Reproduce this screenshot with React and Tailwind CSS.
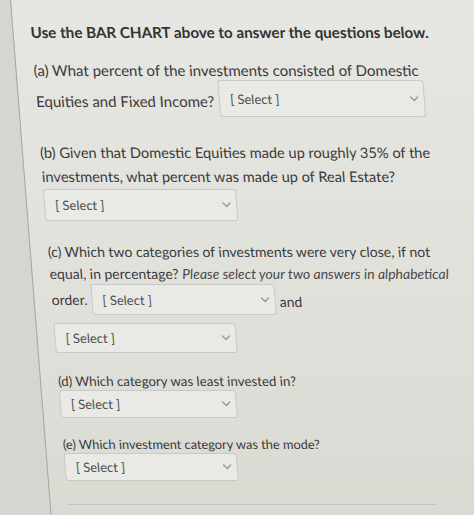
import React from "react";

function Chevron() {
  return (
    <svg width="9" height="6" viewBox="0 0 9 6" fill="none" className="shrink-0">
      <path d="M1 1l3.5 3.5L8 1" stroke="#9a9b97" strokeWidth="1.4" strokeLinecap="round" />
    </svg>
  );
}

function Select({ className = "" }) {
  return (
    <div
      className={
        "flex items-center justify-between rounded-[3px] border border-[#c9cac5] bg-[#e9e9e5] pl-[10px] pr-[5px] text-[13px] leading-5 text-[#505050] " +
        className
      }
    >
      <span>[ Select ]</span>
      <Chevron />
    </div>
  );
}

export default function App() {
  return (
    <div
      className="relative h-[515px] w-[474px] overflow-hidden bg-[#d4d6d1] text-[15px] leading-6 text-[#3a3a3a]"
      style={{ fontFamily: "Lato, 'Noto Sans', 'Liberation Sans', sans-serif" }}
    >
      <div className="ml-[10px] h-[560px] w-[520px] origin-top-left skew-x-[4.5deg] border-l border-[#a4a6a2] bg-gradient-to-b from-[#e6e6e2] via-[#e1e1dc] to-[#d9d9d2] pl-[17px] pt-5">
        <h1 className="text-[15.2px] font-bold text-[#333]">
          Use the BAR CHART above to answer the questions below.
        </h1>

        {/* (a) */}
        <div className="mt-[14px]">
          <p>(a) What percent of the investments consisted of Domestic</p>
          <div className="mt-[-2px] flex items-center gap-[5px]">
            <span className="pt-1">Equities and Fixed Income?</span>
            <Select className="h-[37px] w-[206px]" />
          </div>
        </div>

        {/* (b) */}
        <div className="mt-6 text-[14.6px]">
          <p>(b) Given that Domestic Equities made up roughly 35% of the</p>
          <p>investments, what percent was made up of Real Estate?</p>
          <Select className="mt-0 h-[32px] w-[193px]" />
        </div>

        {/* (c) */}
        <div className="mt-5 text-[14px] leading-[22px]">
          <p>(c) Which two categories of investments were very close, if not</p>
          <p>
            equal, in percentage?{" "}
            <em className="text-[#4a4a4a]">Please select your two answers in alphabetical</em>
          </p>
          <div className="mt-[-1px] flex items-center gap-[4px]">
            <span>order.</span>
            <Select className="h-[31px] w-[184px]" />
            <span className="pt-1">and</span>
          </div>
          <Select className="mt-2 h-[30px] w-[182px]" />
        </div>

        {/* (d) */}
        <div className="mt-[17px] text-[13.3px] leading-[22px]">
          <p>(d) Which category was least invested in?</p>
          <Select className="mt-[-2px] h-[28px] w-[177px]" />
        </div>

        {/* (e) */}
        <div className="mt-[15px] text-[12.8px] leading-[22px]">
          <p>(e) Which investment category was the mode?</p>
          <Select className="mt-[-2px] h-[28px] w-[173px] text-[12.5px]" />
        </div>

        <div className="mt-[23px] w-[368px] border-t border-[#c3c4bf]" />
      </div>
    </div>
  );
}
